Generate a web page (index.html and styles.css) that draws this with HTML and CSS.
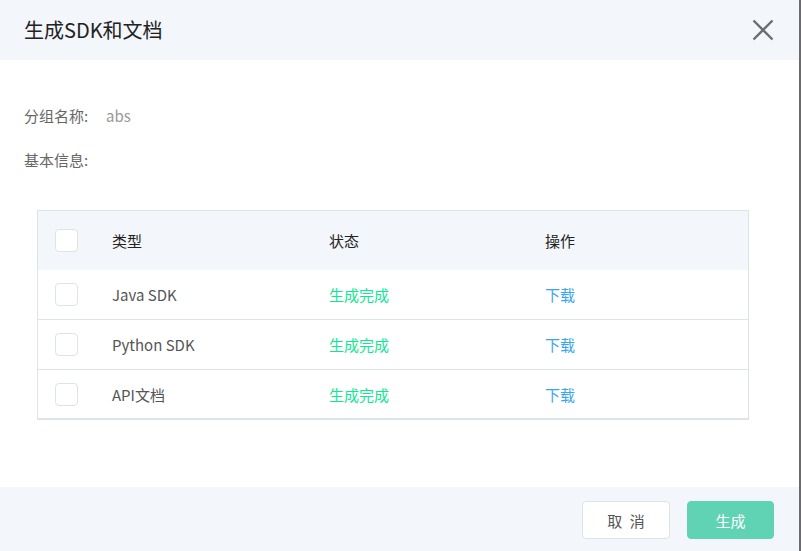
FILE: index.html
```html
<!DOCTYPE html>
<html lang="zh-CN">
<head>
<meta charset="utf-8">
<title>生成SDK和文档</title>
<link rel="stylesheet" href="styles.css">
</head>
<body>
<div class="dialog">
  <div class="header">
    <div class="title">生成SDK和文档</div>
    <div class="close">
      <svg width="22" height="22" viewBox="0 0 22 22"><path d="M1.5 1.5 L20.5 20.5 M20.5 1.5 L1.5 20.5" stroke="#6b6d70" stroke-width="2.4" fill="none"/></svg>
    </div>
  </div>
  <div class="body">
    <div class="field"><span class="label">分组名称:</span><span class="value">abs</span></div>
    <div class="field field2"><span class="label">基本信息:</span></div>
    <div class="table">
      <div class="row head">
        <div class="cell"><span class="cb"></span></div>
        <div class="cell">类型</div>
        <div class="cell">状态</div>
        <div class="cell">操作</div>
      </div>
      <div class="row">
        <div class="cell"><span class="cb"></span></div>
        <div class="cell name">Java SDK</div>
        <div class="cell ok">生成完成</div>
        <div class="cell link">下载</div>
      </div>
      <div class="row">
        <div class="cell"><span class="cb"></span></div>
        <div class="cell name">Python SDK</div>
        <div class="cell ok">生成完成</div>
        <div class="cell link">下载</div>
      </div>
      <div class="row">
        <div class="cell"><span class="cb"></span></div>
        <div class="cell name">API文档</div>
        <div class="cell ok">生成完成</div>
        <div class="cell link">下载</div>
      </div>
    </div>
  </div>
  <div class="footer">
    <button class="btn cancel">取 消</button>
    <button class="btn primary">生成</button>
  </div>
</div>
</body>
</html>
```
FILE: styles.css
```css
* { box-sizing: border-box; }
html, body { margin: 0; padding: 0; }
body {
  background: #6b6b6b;
  font-family: "Noto Sans CJK SC", "Open Sans", sans-serif;
  width: 801px;
  height: 551px;
  overflow: hidden;
}
.dialog {
  width: 799px;
  height: 551px;
  background: #fff;
  display: flex;
  flex-direction: column;
}
.header {
  height: 60px;
  background: #f3f6fa;
  display: flex;
  align-items: center;
  justify-content: space-between;
  padding: 0 25px 0 24px;
}
.title {
  font-size: 20px;
  color: #222;
  line-height: 1;
}
.close { width: 22px; height: 22px; display: flex; }
.body {
  flex: 1;
  padding: 0 0 0 24px;
}
.field {
  margin-top: 46px;
  font-size: 15px;
  line-height: 20px;
  color: #666;
  display: flex;
}
.field2 { margin-top: 24px; }
.label { width: 82px; }
.value { color: #999; }
.table {
  margin: 40px 0 0 13px;
  width: 712px;
  border: 1px solid #dde3ea;
}
.row {
  display: grid;
  grid-template-columns: 74px 217px 216px 1fr;
  height: 50px;
  align-items: center;
  border-bottom: 1px solid #dde3ea;
  font-size: 15px;
  color: #555;
}
.row:last-child { height: 49px; }
.row.head {
  height: 59px;
  background: #f3f6fa;
  border-bottom: none;
  color: #222;
}
.cell { display: flex; align-items: center; }
.cb {
  display: block;
  width: 23px;
  height: 23px;
  margin-left: 17px;
  border: 1px solid #dde3ea;
  border-radius: 4px;
  background: #fff;
}
.name { color: #555; }
.ok { color: #0ee892; }
.link { color: #3aa6f0; }
.footer {
  height: 64px;
  background: #f3f6fa;
  display: flex;
  justify-content: flex-end;
  align-items: flex-start;
  padding: 14px 25px 0 0;
  gap: 17px;
}
.btn {
  height: 38px;
  border-radius: 4px;
  font-family: inherit;
  font-size: 15px;
  cursor: pointer;
}
.cancel {
  width: 88px;
  background: #fff;
  border: 1px solid #dde3ea;
  color: #555;
  letter-spacing: 2px;
  padding-left: 8px;
}
.primary {
  width: 87px;
  background: #5fd3b4;
  border: 1px solid #5fd3b4;
  color: #fff;
}
```
